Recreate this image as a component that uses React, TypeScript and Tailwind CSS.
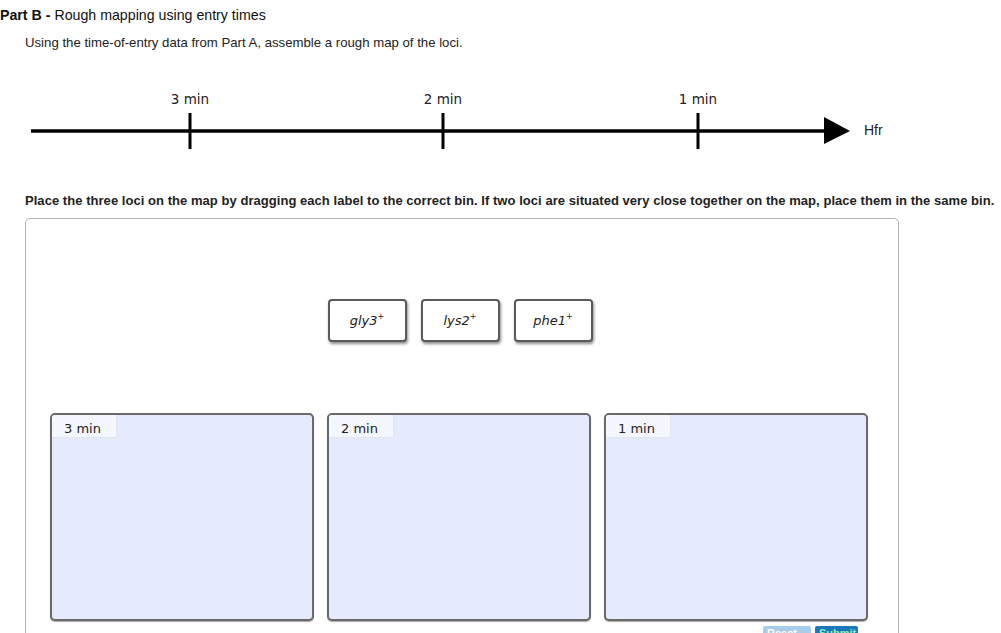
import React from "react";

const tiles = [
  { base: "gly3" },
  { base: "lys2" },
  { base: "phe1" },
];

const bins = ["3 min", "2 min", "1 min"];

function Timeline() {
  const ticks = [
    { x: 190, label: "3 min" },
    { x: 443, label: "2 min" },
    { x: 698, label: "1 min" },
  ];
  return (
    <svg width="900" height="80" viewBox="0 0 900 80" className="block">
      <line x1="31" y1="51" x2="830" y2="51" stroke="#000" strokeWidth="3.5" />
      {ticks.map((t) => (
        <g key={t.x}>
          <line x1={t.x} y1="33" x2={t.x} y2="69" stroke="#000" strokeWidth="3" />
          <text
            x={t.x}
            y="24"
            textAnchor="middle"
            fontFamily="'DejaVu Sans', sans-serif"
            fontSize="13.5"
            fill="#222"
          >
            {t.label}
          </text>
        </g>
      ))}
      <polygon points="824,37 850,51 824,64" fill="#000" />
      <text
        x="864"
        y="55"
        fontFamily="'Liberation Sans', Arial, sans-serif"
        fontSize="14"
        fill="#222"
      >
        Hfr
      </text>
    </svg>
  );
}

export default function App() {
  return (
    <div className="relative h-[633px] w-[1001px] overflow-hidden bg-white text-[#222] font-['Liberation_Sans',Arial,sans-serif]">
      <div className="pt-[7px] text-[14.2px] leading-[17px] text-[#111]">
        <span className="font-bold">Part B - </span>Rough mapping using entry times
      </div>
      <div className="pl-[25px] pt-[11px] text-[13.2px] leading-[15px] text-[#222]">
        Using the time-of-entry data from Part A, assemble a rough map of the loci.
      </div>
      <div className="pt-[30px]">
        <Timeline />
      </div>
      <div className="whitespace-nowrap pl-[25px] pt-[33px] text-[13px] font-bold leading-[15px] text-[#222] tracking-[0.045px]">
        Place the three loci on the map by dragging each label to the correct bin. If two loci are situated very close together on the map, place them in the same bin.
      </div>
      <div className="ml-[25px] mt-[10px] h-[440px] w-[874px] rounded-[5px] border border-[#b4b4b4] pt-[80px]">
        <div className="flex justify-center gap-[14px] pr-[4px]">
          {tiles.map((t) => (
            <div
              key={t.base}
              className="flex h-[43px] w-[79px] items-center justify-center rounded-[4px] border-2 border-[#5a5a5a] bg-white shadow-[1px_2px_3px_rgba(0,0,0,0.45)] font-['DejaVu_Sans',Verdana,sans-serif] text-[13px] italic text-[#222]"
            >
              <span>
                {t.base}
                <sup className="relative -top-[6px] text-[8px] not-italic">+</sup>
              </span>
            </div>
          ))}
        </div>
        <div className="mt-[71px] flex gap-[13px] pl-[24px]">
          {bins.map((b) => (
            <div
              key={b}
              className="h-[208px] w-[264px] rounded-[5px] border-2 border-[#6a6a6a] bg-[#e5ebfc] shadow-[0_1px_1px_rgba(0,0,0,0.35)]"
            >
              <div className="h-[23px] w-[65px] rounded-tl-[3px] border-r border-b border-[#e2e5ee] bg-[#f5f7fe] pl-[12px] pt-[6px] font-['DejaVu_Sans',Verdana,sans-serif] text-[13px] leading-[16px] text-[#222]">
                {b}
              </div>
            </div>
          ))}
        </div>
        <div className="mt-[5px] flex justify-end gap-[4px] pr-[40px]">
          <div className="h-[20px] w-[48px] rounded-[2px] bg-[#a8cdea] px-1 pt-[1px] text-[11px] font-bold leading-[13px] text-white">Reset</div>
          <div className="h-[20px] w-[43px] rounded-[2px] bg-[#1b77be] px-1 pt-[1px] text-[11px] font-bold leading-[13px] text-[#8ef0b0]">Submit</div>
        </div>
      </div>
    </div>
  );
}
